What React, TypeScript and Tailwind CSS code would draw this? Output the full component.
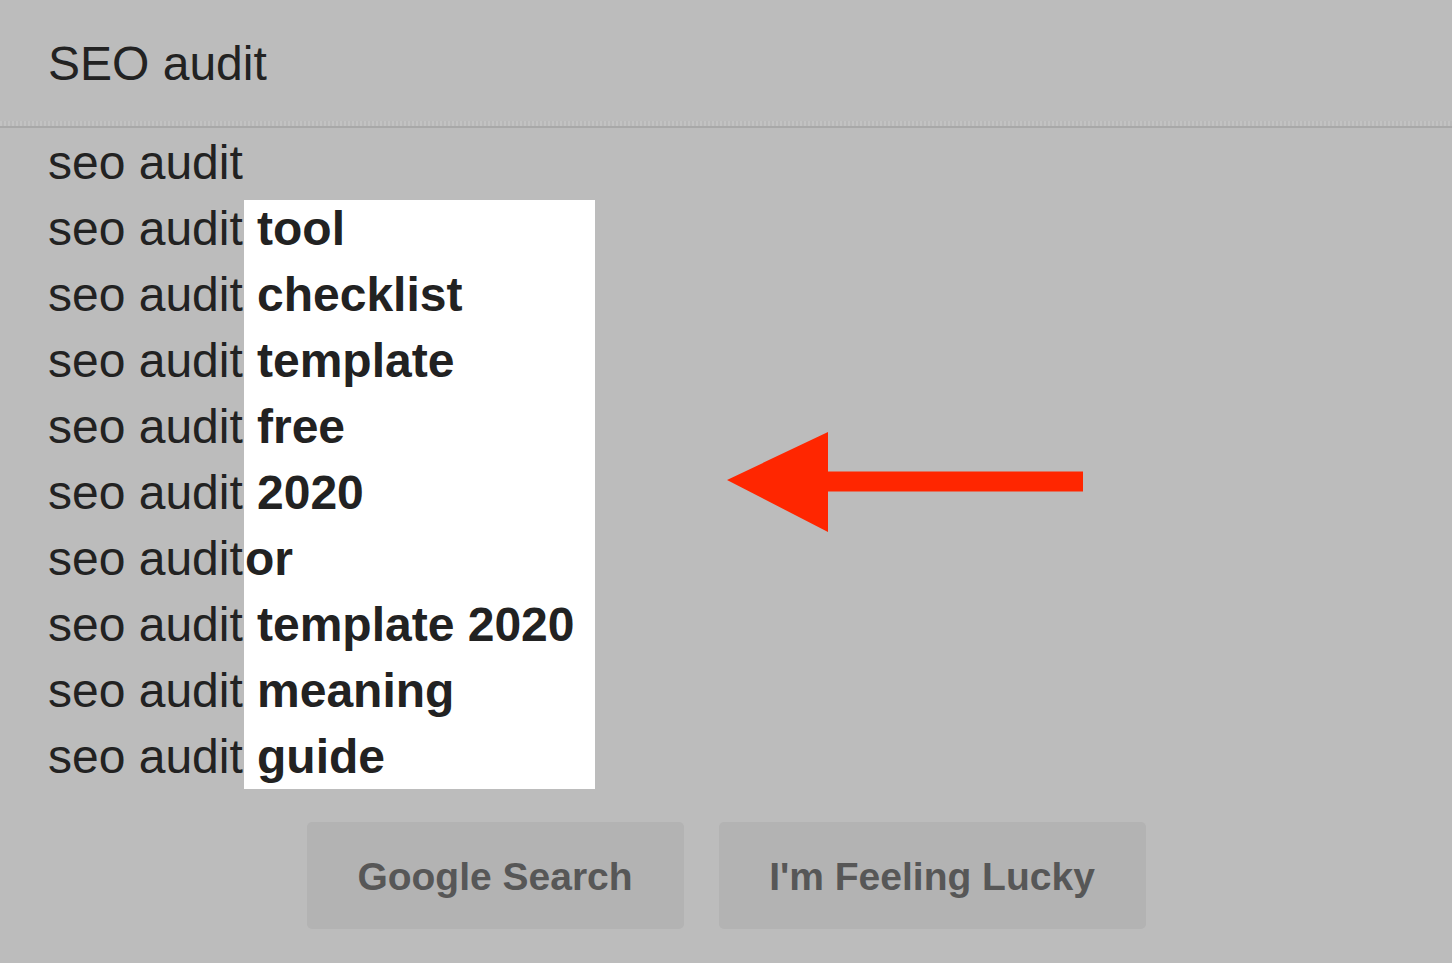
import React from "react";

const suffixes: { text: string; space: boolean }[] = [
  { text: "tool", space: true },
  { text: "checklist", space: true },
  { text: "template", space: true },
  { text: "free", space: true },
  { text: "2020", space: true },
  { text: "or", space: false },
  { text: "template 2020", space: true },
  { text: "meaning", space: true },
  { text: "guide", space: true },
];

export default function App() {
  return (
    <div className="relative w-[1452px] h-[963px] overflow-hidden bg-[#bcbcbc] font-['Liberation_Sans',Arial,sans-serif] text-[#222222]">
      <div className="h-[121px] pt-[31px] pl-[48px] text-[48px] leading-[66px]">SEO audit</div>
      <div className="h-[5px] bg-[repeating-linear-gradient(90deg,#c2c2c2_0px,#c2c2c2_2px,#b8b8b8_2px,#b8b8b8_4px)]" />
      <div className="h-[2px] bg-[#a8a8a8]" />
      <div className="mt-[2px] flex">
        <div className="w-[244px] shrink-0 pl-[48px] text-[48px] leading-[66px] whitespace-nowrap">
          {Array.from({ length: 10 }).map((_, i) => (
            <div key={i}>seo audit</div>
          ))}
        </div>
        <div className="flex flex-col">
          <div className="h-[70px]" />
          <div className="w-[351px] h-[589px] bg-white overflow-hidden">
            <div className="-mt-[4px] text-[48px] leading-[66px] font-bold whitespace-pre">
              {suffixes.map((s, i) => (
                <div key={i} className={s.space ? "pl-[13px]" : "pl-[1px]"}>
                  {s.text}
                </div>
              ))}
            </div>
          </div>
        </div>
      </div>
      <div className="mt-[32px] flex justify-center gap-[35px]">
        <div className="w-[377px] h-[107px] pt-[3px] rounded-[5px] bg-[#b3b3b3] flex items-center justify-center text-[39px] font-bold text-[#575757]">
          Google Search
        </div>
        <div className="w-[427px] h-[107px] pt-[3px] rounded-[5px] bg-[#b3b3b3] flex items-center justify-center text-[39px] font-bold text-[#575757]">
          I'm Feeling Lucky
        </div>
      </div>
      <svg
        className="absolute left-[727px] top-[432px]"
        width="357"
        height="100"
        viewBox="0 0 357 100"
      >
        <polygon
          points="0,48 101,0 101,39.5 356,39.5 356,59.5 101,59.5 101,100"
          fill="#ff2600"
        />
      </svg>
    </div>
  );
}
